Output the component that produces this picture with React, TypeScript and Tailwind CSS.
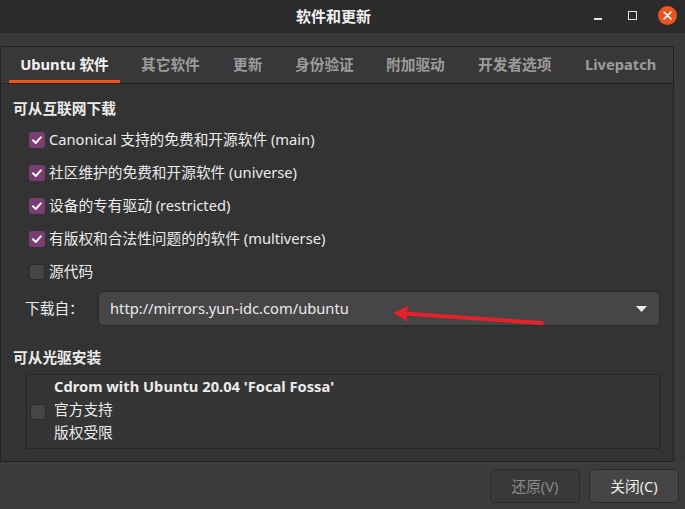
import React from "react";

const FONT = { fontFamily: '"Noto Sans", "Noto Sans CJK SC", sans-serif' };

const TABS = [
  { label: "其它软件", w: "w-[92px]" },
  { label: "更新", w: "w-[62px]" },
  { label: "身份验证", w: "w-[91px]" },
  { label: "附加驱动", w: "w-[92px]" },
  { label: "开发者选项", w: "w-[107px]" },
  { label: "Livepatch", w: "w-[80px]" },
];

const SOURCES = [
  { label: "Canonical 支持的免费和开源软件 (main)", checked: true },
  { label: "社区维护的免费和开源软件 (universe)", checked: true },
  { label: "设备的专有驱动 (restricted)", checked: true },
  { label: "有版权和合法性问题的的软件 (multiverse)", checked: true },
  { label: "源代码", checked: false },
];

function Checkbox({ checked }: { checked: boolean }) {
  if (!checked) {
    return <span className="h-4 w-4 shrink-0 rounded-[3px] border border-[#2a2a2a] bg-[#464646]" />;
  }
  return (
    <span className="flex h-4 w-4 shrink-0 items-center justify-center rounded-[3px] bg-[#7a3d72]">
      <svg width="12" height="12" viewBox="0 0 12 12" fill="none">
        <path d="M2 6.2 4.8 9 10 3.2" stroke="#f4f4f4" strokeWidth="2" strokeLinecap="round" strokeLinejoin="round" />
      </svg>
    </span>
  );
}

export default function App() {
  return (
    <div className="relative flex h-[509px] w-[685px] flex-col overflow-hidden bg-[#3b3b3b] text-[14.7px] text-[#ebebeb]" style={FONT}>
      {/* header bar */}
      <div className="flex h-[33px] shrink-0 items-center bg-[#2b2b2b]">
        <div className="flex-1" />
        <div className="pr-[10px] text-[15px] font-bold text-[#f0f0f0]">软件和更新</div>
        <div className="flex flex-1 items-center justify-end pr-[8px]">
          <span className="mt-[4px] mr-[26px] h-[2px] w-[8px] bg-[#e6e6e6]" />
          <span className="mr-[21px] mb-[2px] h-[9px] w-[9px] border-[1.5px] border-[#e6e6e6]" />
          <span className="mb-[2px] flex h-[19px] w-[19px] items-center justify-center rounded-full bg-[#e95420]">
            <svg width="9" height="9" viewBox="0 0 9 9">
              <path d="M1 1 8 8M8 1 1 8" stroke="#fff" strokeWidth="1.6" strokeLinecap="round" />
            </svg>
          </span>
        </div>
      </div>

      <div className="flex flex-1 flex-col bg-[#393939]">
        {/* notebook */}
        <div className="mt-[13px] mr-[11px] border border-[#232323] bg-[#333333]">
          <div className="flex h-[37px] items-stretch border-b border-[#232323] bg-[#383838] font-bold whitespace-nowrap">
            <div className="ml-[8px] flex w-[111px] shrink-0 flex-col">
              <div className="flex flex-1 items-center justify-center pt-[1px] text-[#f2f2f2]">Ubuntu 软件</div>
              <div className="h-[3px] bg-[#e95420]" />
            </div>
            <div className="w-[21px] shrink-0" />
            {TABS.map((t) => (
              <div key={t.label} className={`flex shrink-0 items-center pb-[2px] text-[#9c9c9c] ${t.w}`}>
                {t.label}
              </div>
            ))}
          </div>

          <div className="flex flex-col pt-[14px] pb-[12px]">
            <div className="pl-[12px] leading-[20px] font-bold">可从互联网下载</div>
            <div className="mt-[5px] flex flex-col">
              {SOURCES.map((s) => (
                <div key={s.label} className="flex h-[33px] items-center gap-[4px] pl-[28px]">
                  <Checkbox checked={s.checked} />
                  <span>{s.label}</span>
                </div>
              ))}
            </div>

            <div className="mt-[3px] mr-[13px] flex h-[35px] items-center">
              <span className="w-[97px] pl-[24px]">下载自：</span>
              <div className="flex h-full flex-1 items-center justify-between rounded-[5px] border border-[#2a2a2a] bg-[#464646] pr-[12px] pl-[11px]">
                <span>http://mirrors.yun-idc.com/ubuntu</span>
                <svg width="11" height="6" viewBox="0 0 11 6">
                  <path d="M0 0h11L5.5 6z" fill="#ededed" />
                </svg>
              </div>
            </div>

            <div className="mt-[21px] pl-[12px] leading-[20px] font-bold">可从光驱安装</div>
            <div className="mt-[7px] mr-[13px] ml-[25px] flex h-[75px] items-center border border-[#262626] bg-[#353535] pl-[3px]">
              <Checkbox checked={false} />
              <div className="ml-[8px] flex flex-col pb-[4px] leading-[23px]">
                <span className="font-bold">Cdrom with Ubuntu 20.04 'Focal Fossa'</span>
                <span>官方支持</span>
                <span>版权受限</span>
              </div>
            </div>
          </div>
        </div>

        {/* action buttons */}
        <div className="flex justify-end gap-[9px] bg-[#3c3c3c] pt-[7px] pr-[6px] pb-[6px]">
          <button className="h-[34px] w-[90px] rounded-[5px] border border-[#2b2b2b] bg-[#393939] text-[#8a8a8a]">还原(V)</button>
          <button className="h-[34px] w-[90px] rounded-[5px] border border-[#2b2b2b] bg-[#454545] text-[#eeeeee]">关闭(C)</button>
        </div>
      </div>

      {/* red annotation arrow */}
      <svg className="pointer-events-none absolute top-0 left-0" width="685" height="509">
        <path d="M542 323 404 313.5" stroke="#e4222a" strokeWidth="4" strokeLinecap="round" />
        <path d="M393 313 409 305.5 406 313.5 408 321.5z" fill="#e4222a" />
      </svg>
    </div>
  );
}
